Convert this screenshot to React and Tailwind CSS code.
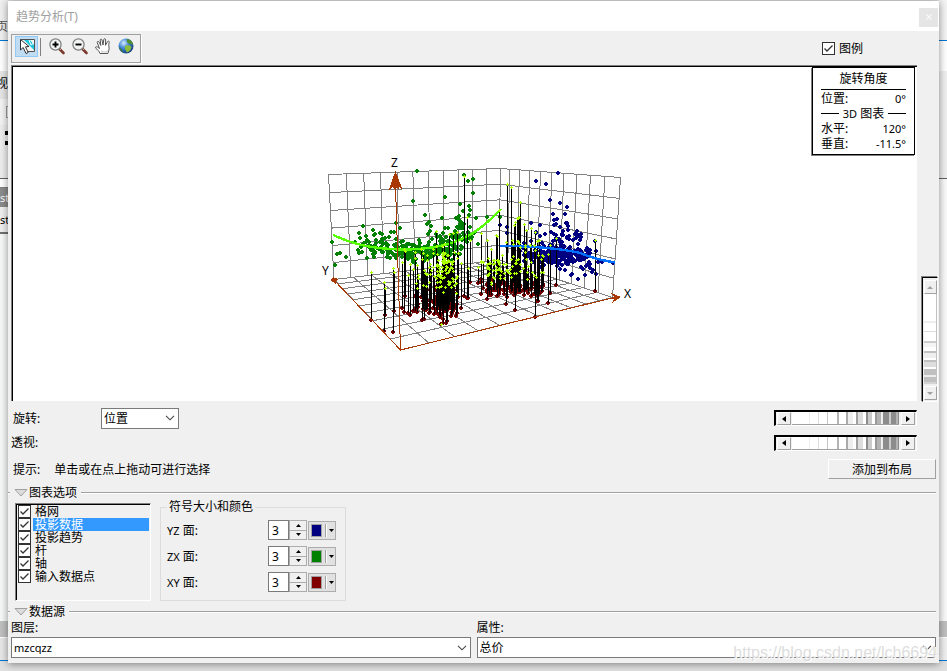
import React from "react";

/* ---------- projection helpers for the 3D chart ---------- */

// Projective map of the unit square onto the quad a(0,0) b(1,0) c(1,1) d(0,1).
function quadMap(a, b, c, d) {
  const dx1 = b[0] - c[0], dx2 = d[0] - c[0], dx3 = a[0] - b[0] + c[0] - d[0];
  const dy1 = b[1] - c[1], dy2 = d[1] - c[1], dy3 = a[1] - b[1] + c[1] - d[1];
  const den = dx1 * dy2 - dx2 * dy1;
  const g = (dx3 * dy2 - dx2 * dy3) / den;
  const h = (dx1 * dy3 - dx3 * dy1) / den;
  return (u, v) => {
    const w = g * u + h * v + 1;
    return [
      ((b[0] - a[0] + g * b[0]) * u + (d[0] - a[0] + h * d[0]) * v + a[0]) / w,
      ((b[1] - a[1] + g * b[1]) * u + (d[1] - a[1] + h * d[1]) * v + a[1]) / w,
    ];
  };
}

function gridPath(map, nu, nv) {
  const seg = (p, q) => `M${p[0].toFixed(1)} ${p[1].toFixed(1)}L${q[0].toFixed(1)} ${q[1].toFixed(1)}`;
  let d = "";
  for (let i = 0; i <= nu; i++) d += seg(map(i / nu, 0), map(i / nu, 1));
  for (let j = 0; j <= nv; j++) d += seg(map(0, j / nv), map(1, j / nv));
  return d;
}

const Y_END = [334, 279.5], FRONT = [400.5, 350], X_END = [612.5, 297.5], BACK = [499, 260];
const Y_TOP = [328.5, 174.5], BACK_TOP = [500.5, 168.5], X_TOP = [620.5, 177.5];

const GRID =
  gridPath(quadMap(Y_TOP, BACK_TOP, BACK, Y_END), 11, 6) +
  gridPath(quadMap(BACK_TOP, X_TOP, X_END, BACK), 10, 6) +
  gridPath(quadMap(Y_END, BACK, X_END, FRONT), 11, 10);

function makeRandom(seed) {
  let s = seed;
  return () => {
    s = (s + 0x6d2b79f5) | 0;
    let t = Math.imul(s ^ (s >>> 15), 1 | s);
    t = (t + Math.imul(t ^ (t >>> 7), 61 | t)) ^ t;
    return ((t ^ (t >>> 14)) >>> 0) / 4294967296;
  };
}

const rnd = makeRandom(77);
const gauss = () => (rnd() + rnd() + rnd() + rnd() - 2) * 1.2;

function cloud(n, cx, cy, sx, sy) {
  return Array.from({ length: n }, () => [Math.round(cx + gauss() * sx), Math.round(cy + gauss() * sy)]);
}

const GREEN = [
  [417, 171], [413, 201], [425, 215], [445, 197], [464, 175], [468, 181], [473, 179], [473, 193], [460, 204],
  [469, 206], [470, 210], [463, 211], [396, 223], [363, 226], [359, 233], [366, 236], [373, 230], [374, 235],
  [382, 234], [391, 232], [400, 228], [429, 222], [431, 226], [427, 224], [442, 218], [456, 218], [459, 220],
  [476, 218], [475, 232], [332, 242], [337, 254], [340, 253], [346, 257], [355, 242], [335, 265], [362, 252],
  [367, 258], [500, 217], [457, 227], [448, 228], [462, 226], [430, 231], [478, 244], [470, 227], [487, 217],
  ...cloud(60, 380, 246, 13, 8),
  ...cloud(65, 408, 251, 16, 7),
  ...cloud(75, 447, 244, 15, 10),
  ...cloud(50, 428, 251, 22, 7),
  ...cloud(22, 464, 231, 8, 14),
];

const BLUE = [
  [558, 173], [536, 181], [546, 184], [550, 200], [560, 203], [567, 207], [553, 214], [565, 214], [557, 219],
  [554, 220], [566, 223], [540, 225], [531, 223], [536, 232], [545, 234], [560, 227], [507, 227], [500, 225],
  [507, 233], [578, 235], [575, 234], [568, 230], [595, 241], [580, 240], [588, 253], [587, 248], [598, 262],
  [596, 274], [592, 272], [585, 275], [578, 279], [571, 275], [572, 274], [590, 250], [593, 270], [602, 262],
  [565, 270], [557, 266], [531, 241], [524, 243], [613, 263],
  ...cloud(90, 564, 254, 17, 8),
  ...cloud(34, 560, 238, 13, 9),
  ...cloud(45, 576, 258, 15, 9),
  ...cloud(110, 545, 254, 15, 5),
];

// Each stem: x, top, bottom.
const STEMS = [
  [464.5, 176, 296], [467.5, 217, 298], [507.5, 184, 282], [511.5, 187, 286], [520.5, 202, 290], [371.5, 272, 320],
  [384.5, 282, 331], [385.5, 288, 315], [393.5, 268, 332], [394.5, 272, 311], [595.5, 240, 291], [535.5, 232, 317],
  [515.5, 222, 310], [519.5, 217, 292], [524.5, 224, 295], [531.5, 228, 296], [499.5, 210, 294], [497.5, 236, 296],
  [537.5, 241, 301], [539.5, 240, 294], [548.5, 254, 303], [550.5, 245, 293], [556.5, 238, 285], [487.5, 240, 299],
  [481.5, 233, 294], [436.5, 231, 297], [433.5, 249, 302], [404.5, 249, 312], [415.5, 252, 311], [449.5, 234, 305],
  [453.5, 233, 307], [457.5, 232, 313], [470.5, 240, 282], [496.5, 235, 286], [514.5, 225, 295], [517.5, 218, 288],
  [518.5, 218, 290], [506.5, 242, 304], [402.5, 262, 308], [408.5, 275, 313], [422.5, 259, 320], [441.5, 324, 324],
  [427.5, 260, 309], [433.5, 253, 302], [461.5, 263, 308], [468.5, 268, 298], [410.5, 264, 315], [446.5, 262, 323],
  [447.5, 262, 321], [443.5, 257, 323], [526.5, 230, 290], [538.5, 255, 301], [542.5, 255, 291], [512.5, 240, 291],
  ...Array.from({ length: 58 }, () => {
    const x = Math.round(434 + gauss() * 16) + 0.5;
    const y = Math.round(306 + gauss() * 9);
    return [x, Math.round(y - 22 - rnd() * 30), y];
  }),
  ...Array.from({ length: 50 }, () => {
    const x = Math.round(445 + gauss() * 10) + 0.5;
    const y = Math.round(303 + gauss() * 12);
    return [x, Math.round(y - 14 - rnd() * 32), y];
  }),
  ...Array.from({ length: 44 }, () => {
    const x = Math.round(520 + gauss() * 16) + 0.5;
    const y = Math.round(288 + gauss() * 6);
    return [x, Math.round(y - 10 - rnd() * 36), y];
  }),
  ...Array.from({ length: 42 }, () => {
    const x = Math.round(493 + gauss() * 9) + 0.5;
    const y = Math.round(287 + gauss() * 7);
    return [x, Math.round(y - 10 - rnd() * 20), y];
  }),
];

const dots = (points) => points.map(([x, y]) => `M${x - 2} ${y - 1}h1v-1h2v1h1v2h-1v1h-2v-1h-1z`).join("");
const crosses = (points) => points.map(([x, y]) => `M${x - 1.5} ${y + 0.5}h3M${x} ${y - 1}v3`).join("");

function TrendChart() {
  return (
    <svg viewBox="13 67 904 334" className="h-full w-full" shapeRendering="crispEdges" role="img" aria-label="趋势分析">
      <path d={GRID} fill="none" stroke="#808080" strokeWidth="1" />
      <path d={dots(GREEN)} fill="#008000" />
      <path d={dots(BLUE)} fill="#000080" />
      <path d="M333 235C350 243 368 248.500 400 249.500C452 250 476 236 501 209" fill="none" stroke="#55ff00" strokeWidth="2.400" />
      <path d={dots(STEMS.map(([x, , b]) => [x - 0.5, b]))} fill="#730000" />
      <path d={STEMS.map(([x, t, b]) => `M${x} ${t}V${b}`).join("")} stroke="#000" strokeWidth="1" />
      <path d="M500 246C530 246 558 248 580 253C592 258 604 261 615 262.500" fill="none" stroke="#0070ff" strokeWidth="2.400" />
      <path d={crosses(STEMS.map(([x, t]) => [x, t]))} stroke="#aaff00" strokeWidth="1" />
      <g fill="none" stroke="#a83800" strokeWidth="1">
        <path d="M333 279L400.500 350L614 297.500" />
        <path d="M400.500 350L395.500 185" />
      </g>
      <g fill="#a83800">
        <path d="M395.500 171L391 183L389 190L393 187L395 190L397 187L399 190L399 187L402.500 190L400 183Z" />
        <path d="M621 297L611 293L614 297L610 298L614 299L612 303Z" />
        <path d="M330 280L335 275L334 278L339 279L336 281L336 284Z" />
      </g>
      <g fill="#000" className="font-['Noto_Sans',sans-serif] text-[12px]" textAnchor="middle">
        <text x="394.500" y="167">Z</text>
        <text x="325.500" y="275">Y</text>
        <text x="627.500" y="298">X</text>
      </g>
    </svg>
  );
}

/* ---------- small controls ---------- */

function CheckBox({ id, label, selected, className }) {
  return (
    <div className={`flex items-center ${className}`}>
      <span className="grid shrink-0">
        <input id={id} type="checkbox" defaultChecked className="peer col-start-1 row-start-1 size-[13px] appearance-none border border-[#333] bg-white" />
        <svg viewBox="0 0 13 13" className="pointer-events-none invisible col-start-1 row-start-1 size-[13px] peer-checked:visible">
          <path d="M2.500 6.500L5 9L10.500 3.500" fill="none" stroke="#333" strokeWidth="1.300" />
        </svg>
      </span>
      <label htmlFor={id} className={selected ? "ml-0.5 h-full flex-1 bg-[#3399ff] pl-0.5 text-white" : "ml-0.5 h-full flex-1 pl-0.5"}>
        {label}
      </label>
    </div>
  );
}

function DropDown({ id, value, className }) {
  return (
    <span className={`grid ${className}`}>
      <select id={id} defaultValue={value} className="col-start-1 row-start-1 h-[21px] w-full appearance-none rounded-none border border-[#7a7a7a] bg-white pl-0.5 text-black">
        <option value={value}>{value}</option>
      </select>
      <svg viewBox="0 0 10 6" className="pointer-events-none col-start-1 row-start-1 mr-1 h-1.5 w-2.5 self-center justify-self-end">
        <path d="M1 0.800L5 4.800L9 0.800" fill="none" stroke="#444" strokeWidth="1.100" />
      </svg>
    </span>
  );
}

const EDGE = "border border-t-white border-l-white border-r-[#a0a0a0] border-b-[#a0a0a0]";

function ThumbWheel({ id, label }) {
  return (
    <div className="flex h-4 w-[143px] items-center border-t-2 border-l-2 border-r border-b border-t-black border-l-black border-r-white border-b-white px-px">
      <button type="button" aria-label="减小" className={`mr-px grid h-[13px] w-3.5 place-items-center ${EDGE}`}>
        <svg viewBox="0 0 4 6" className="h-1.5 w-1"><path d="M4 0V6L0 3Z" /></svg>
      </button>
      <input
        id={id}
        type="range"
        aria-label={label}
        className="h-[13px] min-w-0 flex-1 appearance-none border-b border-[#a0a0a0] bg-[linear-gradient(90deg,#fff_17px,#eee_17px_18px,#fff_18px_26px,#ddd_26px_27px,#fff_27px_35px,#c8c8c8_35px_36px,#fff_36px_45px,#b4b4b4_45px_47px,#fff_47px_54px,#aaa_54px_56px,#eee_56px_61px,#fff_61px_64px,#a0a0a0_64px_66px,#ddd_66px_71px,#fff_71px_74px,#8c8c8c_74px_76px,#ccc_76px_80px,#fff_80px_83px,#999_83px_85px,#b4b4b4_85px_89px,#eee_89px_91px,#8c8c8c_91px_97px,#ccc_97px_99px,#8c8c8c_99px_104px,#b4b4b4_104px_106px,#8c8c8c_106px)] [&::-webkit-slider-thumb]:invisible"
      />
      <button type="button" aria-label="增大" className={`ml-0.5 grid h-[13px] w-3.5 place-items-center ${EDGE}`}>
        <svg viewBox="0 0 4 6" className="h-1.5 w-1"><path d="M0 0V6L4 3Z" /></svg>
      </button>
    </div>
  );
}

function TiltWheel() {
  return (
    <div className="flex h-[125px] w-4 flex-col items-center border-t border-l border-r border-b border-t-black border-l-black border-r-white border-b-white pt-0.5 pb-px shadow-[-1px_-1px_0_#808080]">
      <button type="button" disabled aria-label="向上" className={`grid h-3.5 w-[13px] place-items-center ${EDGE}`}>
        <svg viewBox="0 0 6 3" className="h-[3px] w-1.5"><path d="M0 3H6L3 0Z" fill="#a0a0a0" /></svg>
      </button>
      <input
        type="range"
        disabled
        aria-label="垂直"
        className="min-h-0 w-[13px] flex-1 appearance-none border-r border-[#c0c0c0] bg-[linear-gradient(180deg,#fff_27px,#eee_27px_29px,#fff_29px_37px,#ddd_37px_38px,#fff_38px_47px,#ccc_47px_49px,#f4f4f4_49px_53px,#fff_53px_57px,#c0c0c0_57px_59px,#eee_59px_64px,#fff_64px_66px,#c0c0c0_66px_68px,#ddd_68px_73px,#fff_73px_75px,#c0c0c0_75px_81px,#eee_81px_83px,#c0c0c0_83px_88px,#d4d4d4_88px_90px,#c0c0c0_90px)] [writing-mode:vertical-lr] [&::-webkit-slider-thumb]:invisible"
      />
      <button type="button" disabled aria-label="向下" className={`mt-0.5 grid h-3.5 w-[13px] place-items-center ${EDGE}`}>
        <svg viewBox="0 0 6 3" className="h-[3px] w-1.5"><path d="M0 0H6L3 3Z" fill="#a0a0a0" /></svg>
      </button>
    </div>
  );
}

function SectionTitle({ children }) {
  return (
    <div className="flex h-3 items-center">
      <span className="h-0.5 w-0.5 border-t border-[#a0a0a0] bg-white" />
      <svg viewBox="0 0 14 8" className="ml-1 h-2 w-3.5">
        <path d="M1 0.500H13L7 7Z" fill="#dcdcdc" stroke="#a0a0a0" />
      </svg>
      <h2 className="ml-px leading-4">{children}</h2>
      <span className="ml-1 mr-[3px] h-0.5 flex-1 border-t border-[#a0a0a0] bg-white" />
    </div>
  );
}

function SymbolRow({ plane, id, swatch }) {
  return (
    <div className="flex h-[26px] items-center">
      <label htmlFor={id} className="w-[101px]">
        <span className="text-[11px]">{plane}</span> 面:
      </label>
      <input id={id} type="text" defaultValue="3" className="h-5 w-[21px] border border-[#7a7a7a] bg-white pl-[3px] text-[12px]" />
      <span className="flex h-5 w-[18px] flex-col border border-[#acacac]">
        <button type="button" aria-label="增加" className="grid flex-1 place-items-center bg-[#f0f0f0]">
          <svg viewBox="0 0 5 3" className="h-[3px] w-[5px]"><path d="M0 3H5L2.500 0Z" /></svg>
        </button>
        <button type="button" aria-label="减少" className="grid flex-1 place-items-center border-t border-[#acacac] bg-[#f0f0f0]">
          <svg viewBox="0 0 5 3" className="h-[3px] w-[5px]"><path d="M0 0H5L2.500 3Z" /></svg>
        </button>
      </span>
      <button type="button" aria-label={`${plane} 颜色`} className="ml-px flex h-[19px] w-7 items-center border border-[#acacac] bg-[#e1e1e1] pl-0.5">
        <span className={`h-[13px] w-[11px] border border-[#a0a0a0] ${swatch}`} />
        <span className="ml-[3px] h-[13px] w-0.5 border-l border-[#a0a0a0] bg-white" />
        <svg viewBox="0 0 5 3" className="ml-0.5 h-[3px] w-[5px]"><path d="M0 0H5L2.500 3Z" /></svg>
      </button>
    </div>
  );
}

/* ---------- toolbar icons ---------- */

function SelectIcon() {
  return (
    <svg viewBox="0 0 18 18" className="size-[18px]">
      <path d="M3 2.500H16.500V14.500H8" fill="#f4f4f4" stroke="#505050" />
      <path d="M6 3H12L16 8V13L10 7Z" fill="#1cc4dc" />
      <path d="M11 3L13 8L16 6" fill="none" stroke="#fff" />
      <path d="M2.500 2.500V13L5.200 10.500L8 16.500L10.200 15.500L7.500 9.800L11 9.500Z" fill="#fff" stroke="#303030" />
    </svg>
  );
}

function MagnifierIcon({ plus }) {
  return (
    <svg viewBox="0 0 18 18" className="size-[18px]">
      <path d="M10.500 11L15.500 16" stroke="#7a3b2e" strokeWidth="2.600" strokeLinecap="round" />
      <path d="M10.800 10.800L13 13" stroke="#c49a8c" strokeWidth="1" />
      <circle cx="7.500" cy="7.500" r="5.600" fill="#f2f4f4" stroke="#808080" strokeWidth="1.300" />
      <path d={plus ? "M4.500 7.500H10.500M7.500 4.500V10.500" : "M4.500 7.500H10.500"} stroke="#000" strokeWidth="1.900" />
    </svg>
  );
}

function HandIcon() {
  return (
    <svg viewBox="0 0 18 18" className="size-[18px]">
      <path
        d="M6 16.500C5 14 3.500 12.500 1.500 11C1 10 2.500 9.500 3.500 10L5.500 11.500L3.200 5.500C3 4.300 4.500 4 5 5L6.800 8.500L6.200 3C6.300 1.800 7.800 1.800 8 3L9 8L9.800 2.500C10 1.300 11.600 1.500 11.600 2.800L11.500 8.300L13.600 4.500C14.200 3.600 15.500 4.200 15.200 5.300C14 8.500 15.800 11 14.800 13.500L13.800 16.500Z"
        fill="#fff"
        stroke="#555"
      />
      <path d="M7 15.500H13.500L14 13C11 15 9 14.500 7 13Z" fill="#d4d4d4" />
    </svg>
  );
}

function GlobeIcon() {
  return (
    <svg viewBox="0 0 18 18" className="size-[18px]">
      <defs>
        <radialGradient id="ocean" cx="0.350" cy="0.300" r="0.750">
          <stop offset="0" stopColor="#d8ecff" />
          <stop offset="0.450" stopColor="#3f86d8" />
          <stop offset="1" stopColor="#123a78" />
        </radialGradient>
      </defs>
      <circle cx="9" cy="9" r="7.500" fill="url(#ocean)" />
      <path d="M10 2C13 2 15.500 4.500 16 7.500C14.500 8 13 6 11.500 6.500C10 6 9.500 4 10 2Z" fill="#4f8f2a" />
      <path d="M8 9C10 7.500 13.500 8 14.500 10C14 13 12 15 10 15.500C9.500 13.500 7 12.500 8 9Z" fill="#8dbb3c" />
      <path d="M2 10C4 11 5 13 6.500 15.500C4 14.500 2.300 12.500 2 10Z" fill="#3f7d2a" />
    </svg>
  );
}

const LAYERS = ["格网", "投影数据", "投影趋势", "杆", "轴", "输入数据点"];
const TOOL = "grid h-[21px] w-[23px] place-items-center";

/* ---------- strips of the window behind the dialog ---------- */

function LeftStrip() {
  return (
    <div aria-hidden="true" className="flex w-2 shrink-0 flex-col overflow-hidden bg-[#f8faf9] whitespace-nowrap">
      <div className="h-10 bg-[#f0f0f0] pt-5 text-[#555]"><span className="-ml-1">页面</span></div>
      <div className="h-px bg-[#0078d7]" />
      <div className="h-[30px] bg-white" />
      <div className="h-7 bg-[#e6e6e6] pt-1.5"><span className="-ml-1">视</span></div>
      <div className="flex h-[26px] items-center justify-end bg-[#f4f4f4]"><span className="h-3 w-0.5 border border-r-0 border-[#a0a0a0]" /></div>
      <div className="flex h-[53px] justify-end bg-[#eee]"><span className="mt-1.5 h-3.5 w-[3px] border-y-4 border-black" /></div>
      <div className="h-px bg-[#606060]" />
      <div className="h-2 bg-white" />
      <div className="h-px bg-[#808080]" />
      <div className="flex h-[19px] items-center bg-[#8c8c8c] text-[11px] text-white">st</div>
      <div className="flex h-[25px] items-center bg-[#f0f0f0] text-[11px]">st</div>
      <div className="h-0.5 bg-[#707070]" />
      <div className="flex-1" />
      <div className="h-4 bg-[#c0c0c0]" />
      <div className="h-px bg-white" />
      <div className="h-[22px] bg-[#e8e8e8]" />
      <div className="h-px bg-[#0078d7]" />
      <div className="h-2.5 bg-[#e0e0e0]" />
    </div>
  );
}

function RightStrip() {
  return (
    <div aria-hidden="true" className="flex w-2 shrink-0 flex-col bg-[#fafafa]">
      <div className="h-10 bg-[#f4f4f4]" />
      <div className="h-px bg-[#0078d7]" />
      <div className="h-[30px] bg-white" />
      <div className="h-[107px] bg-[#f0f0f0]" />
      <div className="h-px bg-[#606060]" />
      <div className="flex-1" />
      <div className="h-4 bg-[#c0c0c0]" />
      <div className="h-px bg-white" />
      <div className="h-[22px] bg-[#f0f0f0]" />
      <div className="h-px bg-[#0078d7]" />
      <div className="h-2.5 bg-[#e0e0e0]" />
    </div>
  );
}

export default function App() {
  return (
    <div className="relative flex min-h-screen bg-[#e0e0e0] font-['Noto_Sans','Noto_Sans_CJK_SC',sans-serif] text-[12px] leading-[13px] text-black">
      <LeftStrip />
      <main className="z-10 mt-px mb-2 flex min-w-0 flex-1 flex-col bg-[#f0f0f0] shadow-[0_1px_8px_rgba(0,0,0,0.45)]">
        <header className="flex h-[30px] items-center justify-between bg-white pl-2 pr-px">
          <h1 className="text-[#a0a0a0]">趋势分析(T)</h1>
          <button type="button" aria-label="关闭" className="mt-0.5 grid size-[19px] place-items-center bg-[#e5e5e5]">
            <svg viewBox="0 0 6 6" className="size-1.5"><path d="M0.500 0.500L5.500 5.500M5.500 0.500L0.500 5.500" stroke="#f8f8f8" strokeWidth="1.100" /></svg>
          </button>
        </header>

        <div className="flex h-[34px] items-center justify-between pl-[3px]">
          <div role="toolbar" className="flex h-[29px] w-[130px] border border-[#a0a0a0] pt-px pl-[3px] shadow-[1px_1px_0_#fff]">
            <button type="button" aria-label="选择" className="grid h-[21px] w-[23px] place-items-center border border-[#90c8f6] bg-[#c0dcf3]"><SelectIcon /></button>
            <span className="mt-0.5 mr-1 ml-0.5 h-[18px] w-px bg-[#808080]" />
            <button type="button" aria-label="放大" className={TOOL}><MagnifierIcon plus /></button>
            <button type="button" aria-label="缩小" className={TOOL}><MagnifierIcon /></button>
            <button type="button" aria-label="平移" className={TOOL}><HandIcon /></button>
            <button type="button" aria-label="全图" className={TOOL}><GlobeIcon /></button>
          </div>
          <CheckBox id="legend" label="图例" className="mr-[76px]" />
        </div>

        <div className="flex min-h-[337px] flex-1 pl-[3px]">
          <section className="relative mb-px min-w-0 flex-1 border-t border-l border-[#808080]">
            <div className="h-full border-t border-l border-black bg-white">
              <div className="h-[334px] w-full"><TrendChart /></div>
            </div>
            <aside className="absolute top-px right-0.5 w-[103px] border border-black bg-white px-2 pb-[3px] leading-[15px] shadow-[-1px_1px_0_#808080]">
              <h2 className="mb-px border-b border-black pt-[3px] pb-[3px] text-center">旋转角度</h2>
              <p className="flex justify-between"><span>位置:</span><span className="text-[11px]">0°</span></p>
              <p className="flex items-center gap-1 before:h-px before:flex-1 before:bg-black after:h-px after:flex-1 after:bg-black">
                <span><span className="text-[11px]">3D</span> 图表</span>
              </p>
              <p className="flex justify-between"><span>水平:</span><span className="text-[11px]">120°</span></p>
              <p className="flex justify-between"><span>垂直:</span><span className="text-[11px]">-11.5°</span></p>
            </aside>
          </section>
          <div className="flex w-[22px] flex-col justify-end pl-[5px]"><TiltWheel /></div>
        </div>

        <div className="flex h-8 items-center pr-[22px] pl-[5px]">
          <label htmlFor="rotate" className="w-[88px]">旋转:</label>
          <DropDown id="rotate" value="位置" className="mr-auto w-[78px]" />
          <ThumbWheel id="rotate-wheel" label="旋转" />
        </div>
        <div className="flex h-[17px] items-center justify-between pr-[22px] pl-[3px]">
          <label htmlFor="perspective">透视:</label>
          <ThumbWheel id="perspective" />
        </div>
        <div className="flex h-9 items-center pr-[3px] pl-[5px]">
          <span>提示:</span>
          <span className="mr-auto ml-3.5">单击或在点上拖动可进行选择</span>
          <button type="button" className={`h-5 w-[108px] ${EDGE}`}>添加到布局</button>
        </div>

        <SectionTitle>图表选项</SectionTitle>
        <div className="flex h-[107px] items-start pl-[7px]">
          <div className="mt-1 h-[98px] w-[136px] border border-t-[#808080] border-r-white border-b-white border-l-[#808080]">
            <div className="h-full border-t border-l border-black px-px">
              {LAYERS.map((name, i) => (
                <CheckBox key={name} id={`layer-${i}`} label={name} selected={i === 1} className="h-[13px]" />
              ))}
            </div>
          </div>
          <fieldset className="ml-[9px] h-[102px] w-[186px] border border-[#dcdcdc] px-1.5">
            <legend className="px-0.5 leading-4">符号大小和颜色</legend>
            <div className="pt-0.5">
              <SymbolRow plane="YZ" id="size-yz" swatch="bg-[#000080]" />
              <SymbolRow plane="ZX" id="size-zx" swatch="bg-[#008000]" />
              <SymbolRow plane="XY" id="size-xy" swatch="bg-[#800000]" />
            </div>
          </fieldset>
        </div>

        <SectionTitle>数据源</SectionTitle>
        <div className="grid grid-cols-2 gap-x-1.5 pr-[3px] pb-[5px] pl-[3px]">
          <label htmlFor="layer" className="flex h-[19px] items-center">图层:</label>
          <label htmlFor="attribute" className="flex h-[19px] items-center">属性:</label>
          <DropDown id="layer" value="mzcqzz" className="text-[11px]" />
          <DropDown id="attribute" value="总价" className="" />
        </div>
      </main>
      <RightStrip />
      <p className="pointer-events-none absolute right-2.5 bottom-2 z-20 font-['Liberation_Sans',sans-serif] text-[16px] leading-5 text-[#d4d4d4]/80 [text-shadow:1px_1px_0_#fff]">
        https://blog.csdn.net/lch6694
      </p>
    </div>
  );
}
